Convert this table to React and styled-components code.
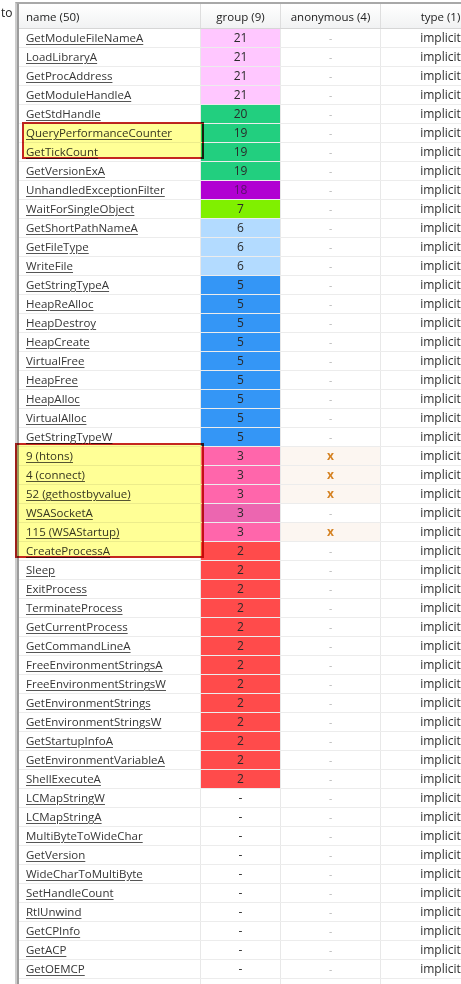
import React from 'react';
import styled, {createGlobalStyle} from 'styled-components';

const GlobalStyle = createGlobalStyle`
  html, body {
    margin: 0;
    padding: 0;
    background: #fff;
    overflow: hidden;
  }
  body {
    font-family: "Open Sans", "Noto Sans", sans-serif;
    font-size: 11.5px;
    color: #333;
  }
`

const Page = styled.div`
  position: relative;
  display: flex;
  width: 461px;
  height: 984px;
  overflow: hidden;
  background: #fff;
  isolation: isolate;
`
const Gutter = styled.div`
  width: 15px;
  flex: none;
  padding: 5px 0 0 1px;
  box-sizing: border-box;
  font-size: 12px;
  color: #222;
  line-height: 16px;
`
const Frame = styled.div`
  margin-top: 2px;
  border-left: 2px solid #cdcdcd;
  border-top: 2px solid #a8a8a8;
  flex: none;
`
const Table = styled.div`
  border-left: 2px solid #9c9c9c;
  width: 482px;
`
const Row = styled.div`
  display: grid;
  grid-template-columns: 182px 80px 100px 120px;
  height: 19px;
  box-sizing: border-box;
  border-bottom: 1px solid #ececec;
`
const HeaderRow = styled(Row)`
  height: 25px;
  border-bottom: 1px solid #d6d6d6;
  background: linear-gradient(#ffffff, #f1f2f3);
`
const HeadCell = styled.div`
  display: flex;
  align-items: center;
  justify-content: ${p => p.$left ? 'flex-start' : 'center'};
  padding-left: ${p => p.$left ? '7px' : '0'};
  border-right: 1px solid #dedede;
  color: #222;
  font-size: 11.5px;
`
const Cell = styled.div`
  display: flex;
  align-items: center;
  justify-content: center;
  border-right: 1px solid #e8e8e8;
  line-height: 18px;
  white-space: nowrap;
  overflow: hidden;
`
const NameCell = styled(Cell)`
  justify-content: flex-start;
  padding-left: 7px;
  color: #363636;
  text-decoration: underline;
  text-underline-offset: 2px;
  text-decoration-color: #555;
`
const GroupCell = styled(Cell)`
  background: ${p => p.$bg || 'transparent'};
  color: ${p => p.$fg || '#2a2a2a'};
  font-size: 12px;
`
const AnonCell = styled(Cell)`
  background: ${p => p.$mark ? '#fcf6f1' : 'transparent'};
  color: ${p => p.$mark ? '#d58324' : '#b5b5b5'};
  font-weight: ${p => p.$mark ? 700 : 400};
  font-size: ${p => p.$mark ? '12px' : '10px'};
`
const TypeCell = styled(Cell)`
  color: #2e2e2e;
  font-size: 12px;
`
const Callout = styled.div`
  position: absolute;
  box-sizing: border-box;
  border: 2px solid #c42620;
  background: #ffff96;
  mix-blend-mode: multiply;
  pointer-events: none;
`

const colors = {
    21: '#ffc7ff',
    20: '#22cf7f',
    19: '#22cf7f',
    18: '#b100d2',
    7: '#80f000',
    6: '#b3dbff',
    5: '#3496f6',
    3: '#ff66ab',
    2: '#ff4b4b',
}

const rows = [
    ['GetModuleFileNameA', 21],
    ['LoadLibraryA', 21],
    ['GetProcAddress', 21],
    ['GetModuleHandleA', 21],
    ['GetStdHandle', 20],
    ['QueryPerformanceCounter', 19],
    ['GetTickCount', 19],
    ['GetVersionExA', 19],
    ['UnhandledExceptionFilter', 18],
    ['WaitForSingleObject', 7],
    ['GetShortPathNameA', 6],
    ['GetFileType', 6],
    ['WriteFile', 6],
    ['GetStringTypeA', 5],
    ['HeapReAlloc', 5],
    ['HeapDestroy', 5],
    ['HeapCreate', 5],
    ['VirtualFree', 5],
    ['HeapFree', 5],
    ['HeapAlloc', 5],
    ['VirtualAlloc', 5],
    ['GetStringTypeW', 5],
    ['9 (htons)', 3, true],
    ['4 (connect)', 3, true],
    ['52 (gethostbyvalue)', 3, true],
    ['WSASocketA', 3, false, '#ec66b0'],
    ['115 (WSAStartup)', 3, true],
    ['CreateProcessA', 2],
    ['Sleep', 2],
    ['ExitProcess', 2],
    ['TerminateProcess', 2],
    ['GetCurrentProcess', 2],
    ['GetCommandLineA', 2],
    ['FreeEnvironmentStringsA', 2],
    ['FreeEnvironmentStringsW', 2],
    ['GetEnvironmentStrings', 2],
    ['GetEnvironmentStringsW', 2],
    ['GetStartupInfoA', 2],
    ['GetEnvironmentVariableA', 2],
    ['ShellExecuteA', 2],
    ['LCMapStringW'],
    ['LCMapStringA'],
    ['MultiByteToWideChar'],
    ['GetVersion'],
    ['WideCharToMultiByte'],
    ['SetHandleCount'],
    ['RtlUnwind'],
    ['GetCPInfo'],
    ['GetACP'],
    ['GetOEMCP'],
]

export default function App() {
    return (
        <>
            <GlobalStyle/>
            <Page>
                <Gutter>to</Gutter>
                <Frame>
                    <Table>
                        <HeaderRow>
                            <HeadCell $left>name (50)</HeadCell>
                            <HeadCell>group (9)</HeadCell>
                            <HeadCell>anonymous (4)</HeadCell>
                            <HeadCell>type (1)</HeadCell>
                        </HeaderRow>
                        {rows.map(([name, group, anon, tint]) => (
                            <Row key={name}>
                                <NameCell>{name}</NameCell>
                                <GroupCell $bg={group ? (tint || colors[group]) : null}
                                           $fg={group === 18 ? '#5a0f6c' : null}>
                                    {group || '-'}
                                </GroupCell>
                                <AnonCell $mark={anon}>{anon ? 'x' : '-'}</AnonCell>
                                <TypeCell>implicit</TypeCell>
                            </Row>
                        ))}
                        <Row>
                            <Cell/>
                            <Cell/>
                            <Cell/>
                            <Cell/>
                        </Row>
                    </Table>
                </Frame>
                <Callout style={{left: 22, top: 122, width: 182, height: 37}}/>
                <Callout style={{left: 15, top: 443, width: 189, height: 115}}/>
            </Page>
        </>
    );
}
